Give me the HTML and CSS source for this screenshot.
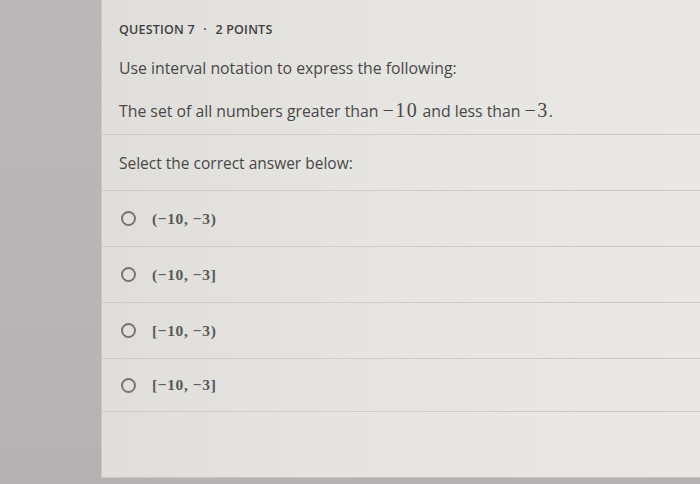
FILE: index.html
```html
<!DOCTYPE html>
<html>
<head>
<meta charset="utf-8">
<link rel="stylesheet" href="styles.css">
</head>
<body>
<div class="screen">
  <div class="side"></div>
  <div class="panel">
    <div class="question">
      <div class="label">QUESTION 7 <span class="dot">·</span> 2 POINTS</div>
      <div class="prompt">Use interval notation to express the following:</div>
      <div class="stem">The set of all numbers greater than <span class="math">−10</span> and less than <span class="math">−3</span>.</div>
    </div>
    <div class="row select">Select the correct answer below:</div>
    <div class="row option"><span class="radio"></span><span class="ans">(−10, −3)</span></div>
    <div class="row option"><span class="radio"></span><span class="ans">(−10, −3]</span></div>
    <div class="row option"><span class="radio"></span><span class="ans">[−10, −3)</span></div>
    <div class="row option last"><span class="radio"></span><span class="ans">[−10, −3]</span></div>
    <div class="rest"></div>
  </div>
</div>
</body>
</html>
```
FILE: styles.css
```css
html, body {
  margin: 0;
  padding: 0;
  width: 700px;
  height: 484px;
  overflow: hidden;
  background: #b8b6b7;
}
.screen {
  display: flex;
  height: 484px;
  background: linear-gradient(180deg, #bab8b9 0%, #b7b5b6 60%, #b4b2b2 100%);
}
.side {
  width: 101px;
  flex: none;
}
.panel {
  flex: 1;
  height: 477px;
  border-left: 1px solid #cac8c5;
  border-bottom: 1px solid #c9c7c4;
  background: linear-gradient(90deg, #e0dedb 0%, #e5e4e0 40%, #e9e8e4 100%);
  display: flex;
  flex-direction: column;
  font-family: "Open Sans", "Liberation Sans", sans-serif;
  color: #4a4a4a;
}
.question {
  height: 135px;
  box-sizing: border-box;
  padding: 22px 0 0 17px;
  border-bottom: 1px solid #cfcdca;
}
.label {
  font-size: 12.5px;
  font-weight: 600;
  letter-spacing: 0.2px;
  color: #3f3f3f;
  line-height: 16px;
}
.dot {
  margin: 0 5px;
}
.prompt {
  margin-top: 20px;
  font-size: 15.8px;
  line-height: 20px;
  color: #484848;
}
.stem {
  margin-top: 22px;
  font-size: 15.8px;
  line-height: 20px;
  color: #484848;
}
.math {
  font-family: "Liberation Serif", "DejaVu Serif", serif;
  font-size: 20px;
  letter-spacing: 1.5px;
}
.row {
  height: 55px;
  border-bottom: 1px solid #cfcdca;
  display: flex;
  align-items: center;
  padding-left: 17px;
}
.select {
  font-size: 15.5px;
  color: #484848;
}
.option {
  gap: 16px;
  padding-left: 19px;
}
.option.last {
  height: 52px;
}
.radio {
  width: 11px;
  height: 11px;
  border: 2px solid #777575;
  border-radius: 50%;
  flex: none;
}
.ans {
  font-family: "Liberation Serif", "DejaVu Serif", serif;
  font-size: 15.5px;
  font-weight: bold;
  letter-spacing: 0.6px;
  color: #585858;
}
.rest {
  flex: 1;
}
```
